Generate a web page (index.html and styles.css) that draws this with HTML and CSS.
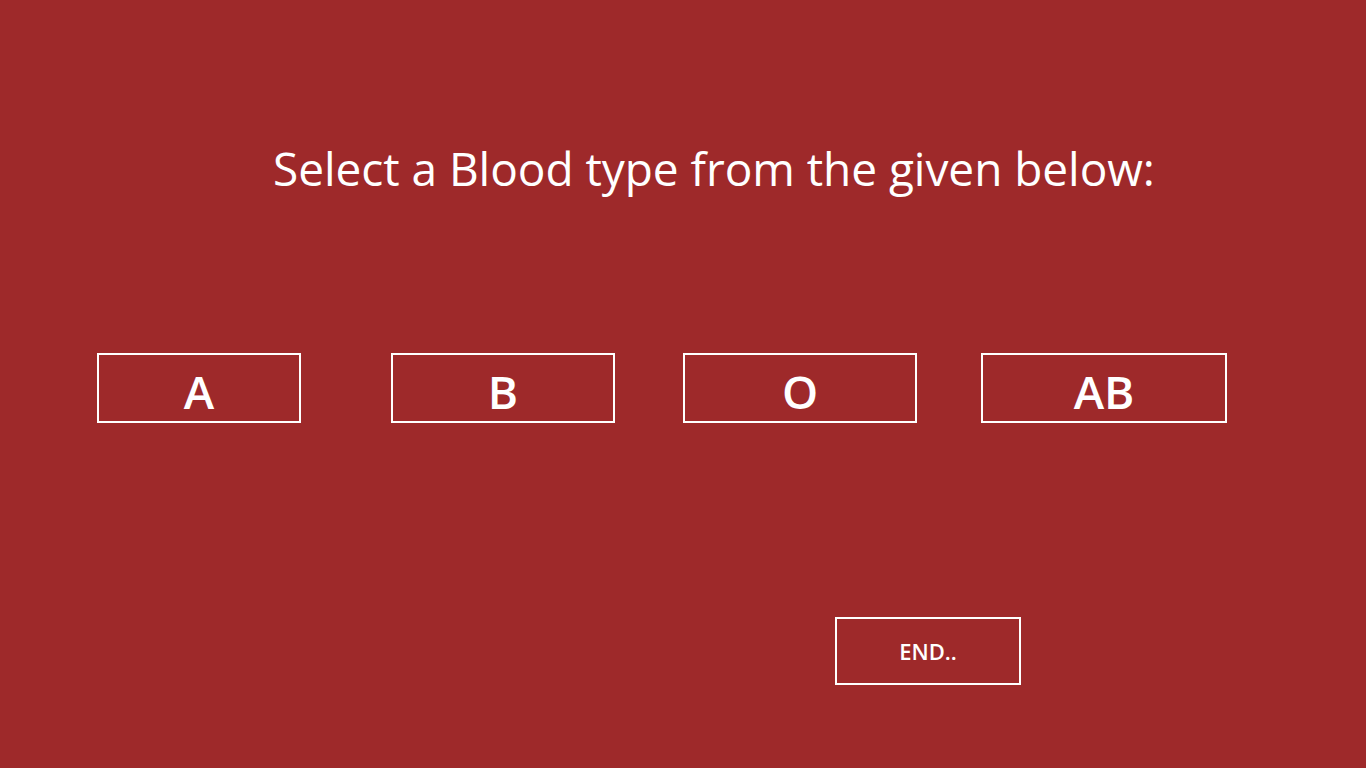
FILE: index.html
```html
<!DOCTYPE html>
<html>
<head>
<meta charset="utf-8">
<link rel="stylesheet" href="styles.css">
</head>
<body>
<main class="page">
  <h1 class="title">Select a Blood type from the given below:</h1>
  <div class="types">
    <button class="type type-a">A</button>
    <button class="type type-b">B</button>
    <button class="type type-o">O</button>
    <button class="type type-ab">AB</button>
  </div>
  <div class="footer">
    <button class="end">END..</button>
  </div>
</main>
</body>
</html>
```
FILE: styles.css
```css
html, body {
  margin: 0;
  padding: 0;
  background: #9e292a;
  height: 100%;
}
.page {
  width: 1366px;
  height: 768px;
  display: flex;
  flex-direction: column;
  font-family: "Open Sans", "Noto Sans", sans-serif;
  color: #fff;
}
.title {
  margin: 0;
  padding: 137px 0 0 273px;
  font-size: 46px;
  font-weight: 400;
  line-height: 62px;
  letter-spacing: -0.05px;
  white-space: nowrap;
}
.types {
  display: flex;
  margin-top: 154px;
  padding-left: 97px;
}
.type {
  box-sizing: border-box;
  height: 70px;
  border: 2px solid #fff;
  background: transparent;
  color: #fff;
  font-family: inherit;
  font-size: 46px;
  font-weight: 600;
  padding: 6px 0 0;
  line-height: 1;
}
.type-a { width: 204px; }
.type-b { width: 224px; margin-left: 90px; }
.type-o { width: 234px; margin-left: 68px; }
.type-ab { width: 246px; margin-left: 64px; }
.footer {
  display: flex;
  margin-top: 194px;
  padding-left: 835px;
}
.end {
  box-sizing: border-box;
  width: 186px;
  height: 68px;
  border: 2px solid #fff;
  background: transparent;
  color: #fff;
  font-family: inherit;
  font-size: 22px;
  font-weight: 600;
  padding: 0 0 1px;
}
```
